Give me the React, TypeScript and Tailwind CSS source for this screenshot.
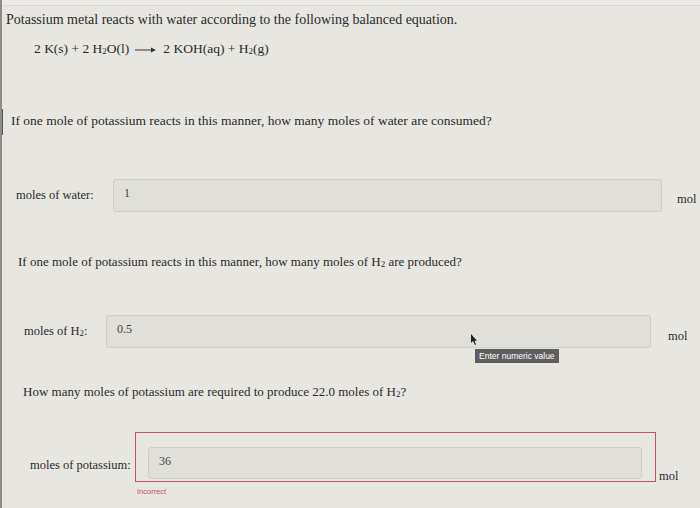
import React from 'react'

function Sub({ children }: { children: React.ReactNode }) {
  return <sub className="text-[9px] leading-none relative top-[1px]">{children}</sub>
}

function Arrow() {
  return (
    <svg width="22" height="8" viewBox="0 0 22 8" className="inline-block mx-[6px] align-middle">
      <line x1="0" y1="4" x2="19" y2="4" stroke="#333" strokeWidth="1" />
      <path d="M16 1.5 L21 4 L16 6.5 Z" fill="#333" />
    </svg>
  )
}

function Field({ value }: { value: string }) {
  return (
    <div className="flex-1 h-[33px] rounded-[3px] border border-[#cfcdc8] bg-[#e0dfda] px-[10px] pt-[4px] text-[12px] text-[#444]">
      {value}
    </div>
  )
}

export default function App() {
  return (
    <div
      className="relative w-[700px] h-[508px] overflow-hidden bg-[#e7e6e1] border-l-[2px] border-[#8d8c88] text-[#2a2a2a]"
      style={{ fontFamily: '"Liberation Serif", "Times New Roman", serif' }}
    >
      <div className="h-[6px] border-b border-[#d8d7d2] bg-[#ebeae6]" />

      <p className="mt-[5px] pl-[4px] text-[14px] leading-[18px]">
        Potassium metal reacts with water according to the following balanced equation.
      </p>

      <p className="mt-[11px] pl-[32px] text-[13.5px] leading-[18px]">
        2 K(s) + 2 H<Sub>2</Sub>O(l)
        <Arrow />2 KOH(aq) + H<Sub>2</Sub>(g)
      </p>

      <div className="relative mt-[54px]">
        <div className="absolute left-[-2px] top-[-3px] w-[3px] h-[26px] bg-[#555]" />
        <p className="pl-[9px] text-[13.5px] leading-[18px]">
          If one mole of potassium reacts in this manner, how many moles of water are consumed?
        </p>
      </div>

      <div className="mt-[49px] flex items-center">
        <span className="w-[111px] pl-[14px] text-[12.5px]">moles of water:</span>
        <Field value="1" />
        <span className="w-[38px] pl-[15px] pt-[8px] text-[12.5px]">mol</span>
      </div>

      <p className="mt-[41px] pl-[16px] text-[13px] leading-[18px]">
        If one mole of potassium reacts in this manner, how many moles of H<Sub>2</Sub> are produced?
      </p>

      <div className="relative mt-[44px] flex items-center pr-[11px]">
        <span className="w-[104px] pl-[22px] text-[12.5px]">
          moles of H<Sub>2</Sub>:
        </span>
        <Field value="0.5" />
        <span className="w-[38px] pl-[17px] pt-[10px] text-[12.5px]">mol</span>

        <svg width="8" height="12" viewBox="0 0 8 12" className="absolute left-[468px] top-[19px]">
          <path d="M1 0 L1 9 L3 7 L5 11 L6 10.5 L4.5 6.8 L7 6.8 Z" fill="#222" />
        </svg>
        <div
          className="absolute left-[473px] top-[34px] bg-[#5e5e60] px-[4px] py-[2px] text-[8.5px] leading-[10px] text-white"
          style={{ fontFamily: '"Liberation Sans", Arial, sans-serif' }}
        >
          Enter numeric value
        </div>
      </div>

      <p className="mt-[35px] pl-[21px] text-[13px] leading-[18px]">
        How many moles of potassium are required to produce 22.0 moles of H<Sub>2</Sub>?
      </p>

      <div className="mt-[31px] flex items-end pr-[10px]">
        <span className="w-[133px] pl-[28px] pb-[7px] text-[12.5px]">moles of potassium:</span>
        <div className="relative flex-1 h-[50px] border-[1.5px] border-[#c2525e] pl-[12px] pr-[13px] pt-[14px]">
          <div className="h-[32px] rounded-[3px] border border-[#cfcdc8] bg-[#e0dfda] px-[10px] pt-[4px] text-[12px] text-[#444]">
            36
          </div>
          <span
            className="absolute left-[1px] top-[53px] text-[7.5px] text-[#c2525e]"
            style={{ fontFamily: '"Liberation Sans", Arial, sans-serif' }}
          >
            Incorrect
          </span>
        </div>
        <span className="w-[34px] pl-[3px] mb-[-4px] text-[12.5px]">mol</span>
      </div>
    </div>
  )
}
